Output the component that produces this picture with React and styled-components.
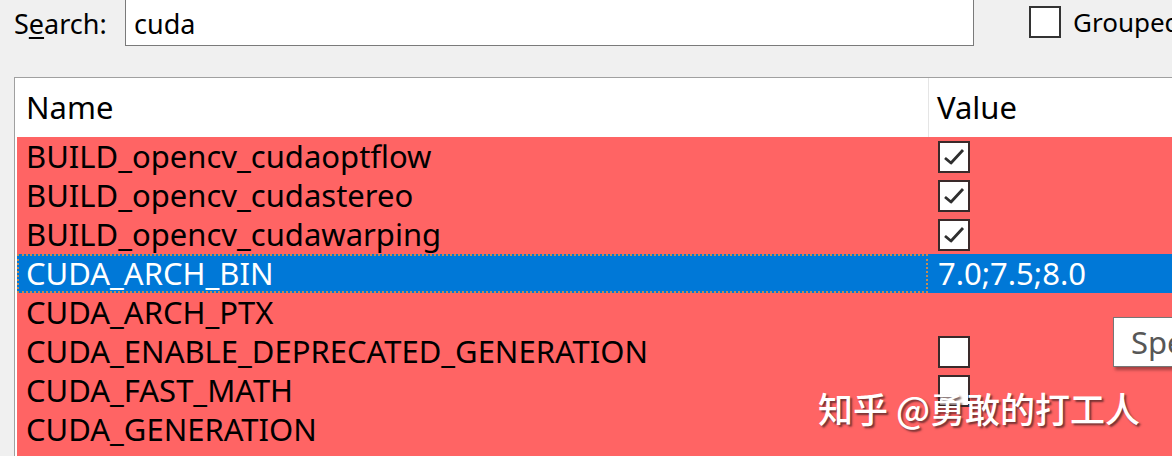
import React from "react";
import styled, { createGlobalStyle } from "styled-components";

const GlobalStyle = createGlobalStyle`
  body {
    margin: 0;
    background: #f0f0f0;
    font-family: "Noto Sans", "Open Sans", sans-serif;
  }
`;

const Page = styled.div`
  position: relative;
  width: 1172px;
  height: 456px;
  overflow: hidden;
  background: #f0f0f0;
  color: #000;
`;

const SearchBar = styled.div`
  display: flex;
  align-items: center;
  height: 48px;
  margin-top: -2px;
  padding-left: 14px;
`;

const Label = styled.label`
  flex-shrink: 0;
  font-size: 27px;
  width: 111px;
  padding-top: 2px;
  u {
    text-decoration-thickness: 2px;
    text-underline-offset: 3px;
  }
`;

const SearchInput = styled.div`
  flex-shrink: 0;
  box-sizing: border-box;
  width: 849px;
  height: 48px;
  background: #fff;
  border: 1px solid #7a7a7a;
  padding: 2px 8px 0;
  display: flex;
  align-items: center;
  font-size: 27px;
`;

const GroupedBox = styled.div`
  flex-shrink: 0;
  display: flex;
  align-items: center;
  margin-left: 55px;
  font-size: 26px;
  gap: 12px;
  white-space: nowrap;
`;

const EmptyBox = styled.span`
  box-sizing: border-box;
  width: 32px;
  height: 32px;
  border: 2px solid #333;
  background: #fff;
`;

const Table = styled.div`
  margin: 31px 0 0 14px;
  border-left: 1px solid #a0a0a0;
  border-top: 1px solid #a0a0a0;
  background: #fff;
`;

const HeaderRow = styled.div`
  display: grid;
  grid-template-columns: 914px 1fr;
  grid-template-rows: 59px;
  font-size: 31px;
  line-height: 1;
`;

const HeaderCell = styled.div`
  display: flex;
  align-items: center;
  padding-left: ${(p) => p.$pad}px;
  border-right: ${(p) => (p.$divider ? "1px solid #e5e5e5" : "none")};
`;

const Body = styled.div`
  padding-left: 2px;
`;

const Row = styled.div`
  display: grid;
  grid-template-columns: 911px 1fr;
  grid-template-rows: 39px;
  font-size: 31px;
  line-height: 1;
  background: ${(p) => (p.$selected ? "#0078d7" : "#ff6464")};
  color: ${(p) => (p.$selected ? "#fff" : "#000")};
`;

const NameCell = styled.div`
  box-sizing: border-box;
  display: flex;
  align-items: center;
  padding-left: 7px;
  white-space: nowrap;
  border: 2px dotted ${(p) => (p.$focus ? "#c48a52" : "transparent")};
`;

const ValueCell = styled.div`
  display: flex;
  align-items: center;
  padding-left: 10px;
  white-space: nowrap;
`;

const CheckBox = styled.span`
  box-sizing: border-box;
  width: 32px;
  height: 32px;
  border: 2px solid #3a2a2a;
  background: #fff;
  display: flex;
  align-items: center;
  justify-content: center;
`;

const Tooltip = styled.div`
  position: absolute;
  left: 1113px;
  top: 317px;
  width: 80px;
  height: 50px;
  box-sizing: border-box;
  background: #fff;
  border: 1px solid #767676;
  box-shadow: 2px 3px 3px rgba(0, 0, 0, 0.35);
  color: #575757;
  font-size: 31px;
  line-height: 1;
  padding-left: 17px;
  display: flex;
  align-items: center;
`;

const Watermark = styled.div`
  position: absolute;
  left: 818px;
  top: 382px;
  font-family: "Noto Sans CJK SC", sans-serif;
  font-size: 35px;
  font-weight: 500;
  color: #fff;
  text-shadow: 2px 2px 2px rgba(60, 30, 30, 0.7);
  white-space: nowrap;
`;

const Check = () => (
  <svg width="28" height="28" viewBox="0 0 28 28">
    <polyline
      points="5,15 11,20 23,7"
      fill="none"
      stroke="#2e2e2e"
      strokeWidth="2.8"
      strokeLinejoin="round"
    />
  </svg>
);

const rows = [
  { name: "BUILD_opencv_cudaoptflow", check: true },
  { name: "BUILD_opencv_cudastereo", check: true },
  { name: "BUILD_opencv_cudawarping", check: true },
  { name: "CUDA_ARCH_BIN", value: "7.0;7.5;8.0", selected: true },
  { name: "CUDA_ARCH_PTX" },
  { name: "CUDA_ENABLE_DEPRECATED_GENERATION", check: false },
  { name: "CUDA_FAST_MATH", check: false },
  { name: "CUDA_GENERATION" },
  { name: "" },
];

export default function App() {
  return (
    <Page>
      <GlobalStyle />
      <SearchBar>
        <Label>
          S<u>e</u>arch:
        </Label>
        <SearchInput>cuda</SearchInput>
        <GroupedBox>
          <EmptyBox />
          Grouped
        </GroupedBox>
      </SearchBar>
      <Table>
        <HeaderRow>
          <HeaderCell $pad={11} $divider>
            Name
          </HeaderCell>
          <HeaderCell $pad={8}>Value</HeaderCell>
        </HeaderRow>
        <Body>
          {rows.map((r, i) => (
            <Row key={i} $selected={r.selected}>
              <NameCell $focus={r.selected}>{r.name}</NameCell>
              <ValueCell>
                {r.check === true && (
                  <CheckBox>
                    <Check />
                  </CheckBox>
                )}
                {r.check === false && <CheckBox />}
                {r.value && <span>{r.value}</span>}
              </ValueCell>
            </Row>
          ))}
        </Body>
      </Table>
      <Tooltip>Spe</Tooltip>
      <Watermark>知乎 @勇敢的打工人</Watermark>
    </Page>
  );
}
